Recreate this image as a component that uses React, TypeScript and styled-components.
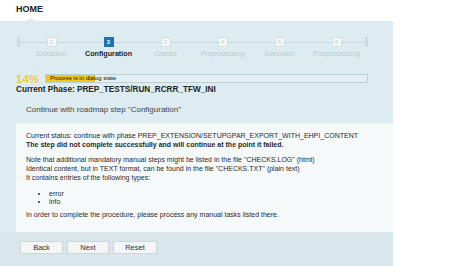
import React from "react";
import styled, { createGlobalStyle } from "styled-components";

const GlobalStyle = createGlobalStyle`
  html, body {
    margin: 0;
    padding: 0;
    background: #ffffff;
    font-family: "Liberation Sans", Arial, sans-serif;
    color: #333;
  }
`;

const Page = styled.div`
  width: 474px;
  height: 266px;
  overflow: hidden;
`;

const Header = styled.div`
  height: 21px;
  padding-left: 16px;
  font-size: 9px;
  font-weight: bold;
  line-height: 19px;
  color: #222;
`;

const Panel = styled.div`
  position: relative;
  width: 393px;
  background: #dcecf0;

  &::before {
    content: "";
    position: absolute;
    left: 27px;
    top: -3px;
    border-left: 4px solid transparent;
    border-right: 4px solid transparent;
    border-bottom: 3px solid #dcecf0;
  }
`;

const Roadmap = styled.div`
  display: flex;
  align-items: flex-start;
  padding: 16px 0 0 17px;
  height: 40px;
  box-sizing: border-box;
`;

const Track = styled.div`
  display: flex;
  padding-left: 3px;
  background: linear-gradient(#c9d9de, #c9d9de) no-repeat;
  background-size: 100% 1px;
  background-position: 0 5px;
`;

const Cap = styled.div`
  width: 3px;
  height: 10px;
  background: #cfdadd;
`;

const Step = styled.div`
  width: 57px;
  display: flex;
  flex-direction: column;
  align-items: center;
`;

const StepBox = styled.div<{ $active?: boolean }>`
  width: 10px;
  height: 10px;
  box-sizing: border-box;
  border: 1px solid ${({ $active }) => ($active ? "#1a73b5" : "#d3e0e3")};
  background: ${({ $active }) => ($active ? "#1a73b5" : "#f2f7f8")};
  color: ${({ $active }) => ($active ? "#fff" : "#c4cfd2")};
  font-size: 6px;
  font-weight: ${({ $active }) => ($active ? "bold" : "normal")};
  line-height: 8px;
  text-align: center;
`;

const StepLabel = styled.div<{ $active?: boolean }>`
  margin-top: 2px;
  font-size: ${({ $active }) => ($active ? "7.2px" : "6.8px")};
  font-weight: ${({ $active }) => ($active ? "bold" : "normal")};
  color: ${({ $active }) => ($active ? "#1e1e1e" : "#bccacf")};
  white-space: nowrap;
  line-height: 10px;
`;

const ProgressRow = styled.div`
  display: flex;
  align-items: center;
  gap: 7px;
  padding: 11px 0 0 16px;
  height: 24px;
  box-sizing: border-box;
`;

const Percent = styled.div`
  font-size: 11.5px;
  font-weight: bold;
  color: #f3c74a;
  width: 22px;
  line-height: 12px;
`;

const Bar = styled.div`
  position: relative;
  width: 323px;
  height: 9px;
  box-sizing: border-box;
  border: 1px solid #bcd0d6;
  background: #e3eff2;
  display: flex;
`;

const BarFill = styled.div`
  background: #f6c61c;
  height: 100%;
`;

const BarText = styled.div`
  position: absolute;
  left: 4px;
  top: 0;
  font-size: 6px;
  line-height: 7px;
  color: #111;
  white-space: nowrap;
`;

const Phase = styled.div`
  padding-left: 16px;
  font-size: 8.2px;
  font-weight: bold;
  color: #222;
  line-height: 10px;
`;

const SubHeader = styled.div`
  padding: 10px 0 0 26px;
  height: 28px;
  box-sizing: border-box;
  font-size: 8px;
  color: #444;
  line-height: 10px;
`;

const Content = styled.div`
  margin-left: 16px;
  padding: 8px 10px 0;
  height: 109px;
  box-sizing: border-box;
  background: #f6f9fa;
  border-top: 1px solid #e6eef0;
  font-size: 7px;
  line-height: 8.7px;
  color: #2a2a2a;
`;

const Para = styled.p<{ $gap?: number }>`
  margin: 0 0 ${({ $gap }) => $gap ?? 7}px;
`;

const Bullets = styled.ul`
  margin: 0 0 4px;
  padding-left: 23px;
  list-style: disc;
`;

const Footer = styled.div`
  display: flex;
  gap: 4px;
  padding: 9px 0 0 20px;
  height: 34px;
  box-sizing: border-box;
  background: #d9e6eb;
`;

const Button = styled.button<{ $w: number }>`
  width: ${({ $w }) => $w}px;
  height: 13px;
  padding: 0;
  border: 1px solid #cfd6d9;
  background: #f4f5f5;
  font-family: "Liberation Sans", Arial, sans-serif;
  font-size: 7.5px;
  color: #333;
  line-height: 11px;
`;

const steps = [
  "Extraction",
  "Configuration",
  "Checks",
  "Preprocessing",
  "Execution",
  "Postprocessing",
];

export default function App() {
  const percent = 14;
  return (
    <Page>
      <GlobalStyle />
      <Header>HOME</Header>
      <Panel>
        <Roadmap>
          <Cap />
          <Track>
            {steps.map((s, i) => (
              <Step key={s}>
                <StepBox $active={i === 1}>{i + 1}</StepBox>
                <StepLabel $active={i === 1}>{s}</StepLabel>
              </Step>
            ))}
          </Track>
          <Cap />
        </Roadmap>
        <ProgressRow>
          <Percent>{percent}%</Percent>
          <Bar>
            <BarFill style={{ width: `${percent * 1.1}%` }} />
            <BarText>Process is in dialog state</BarText>
          </Bar>
        </ProgressRow>
        <Phase>Current Phase: PREP_TESTS/RUN_RCRR_TFW_INI</Phase>
        <SubHeader>Continue with roadmap step "Configuration"</SubHeader>
        <Content>
          <Para>
            Current status: continue with phase PREP_EXTENSION/SETUPGPAR_EXPORT_WITH_EHPI_CONTENT
            <br />
            <b>The step did not complete successfully and will continue at the point it failed.</b>
          </Para>
          <Para>
            Note that additional mandatory manual steps might be listed in the file "CHECKS.LOG" (html)
            <br />
            Identical content, but in TEXT format, can be found in the file "CHECKS.TXT" (plain text)
            <br />
            It contains entries of the following types:
          </Para>
          <Bullets>
            <li>error</li>
            <li>info</li>
          </Bullets>
          <Para>In order to complete the procedure, please process any manual tasks listed there.</Para>
        </Content>
        <Footer>
          <Button $w={43}>Back</Button>
          <Button $w={42}>Next</Button>
          <Button $w={44}>Reset</Button>
        </Footer>
      </Panel>
    </Page>
  );
}
